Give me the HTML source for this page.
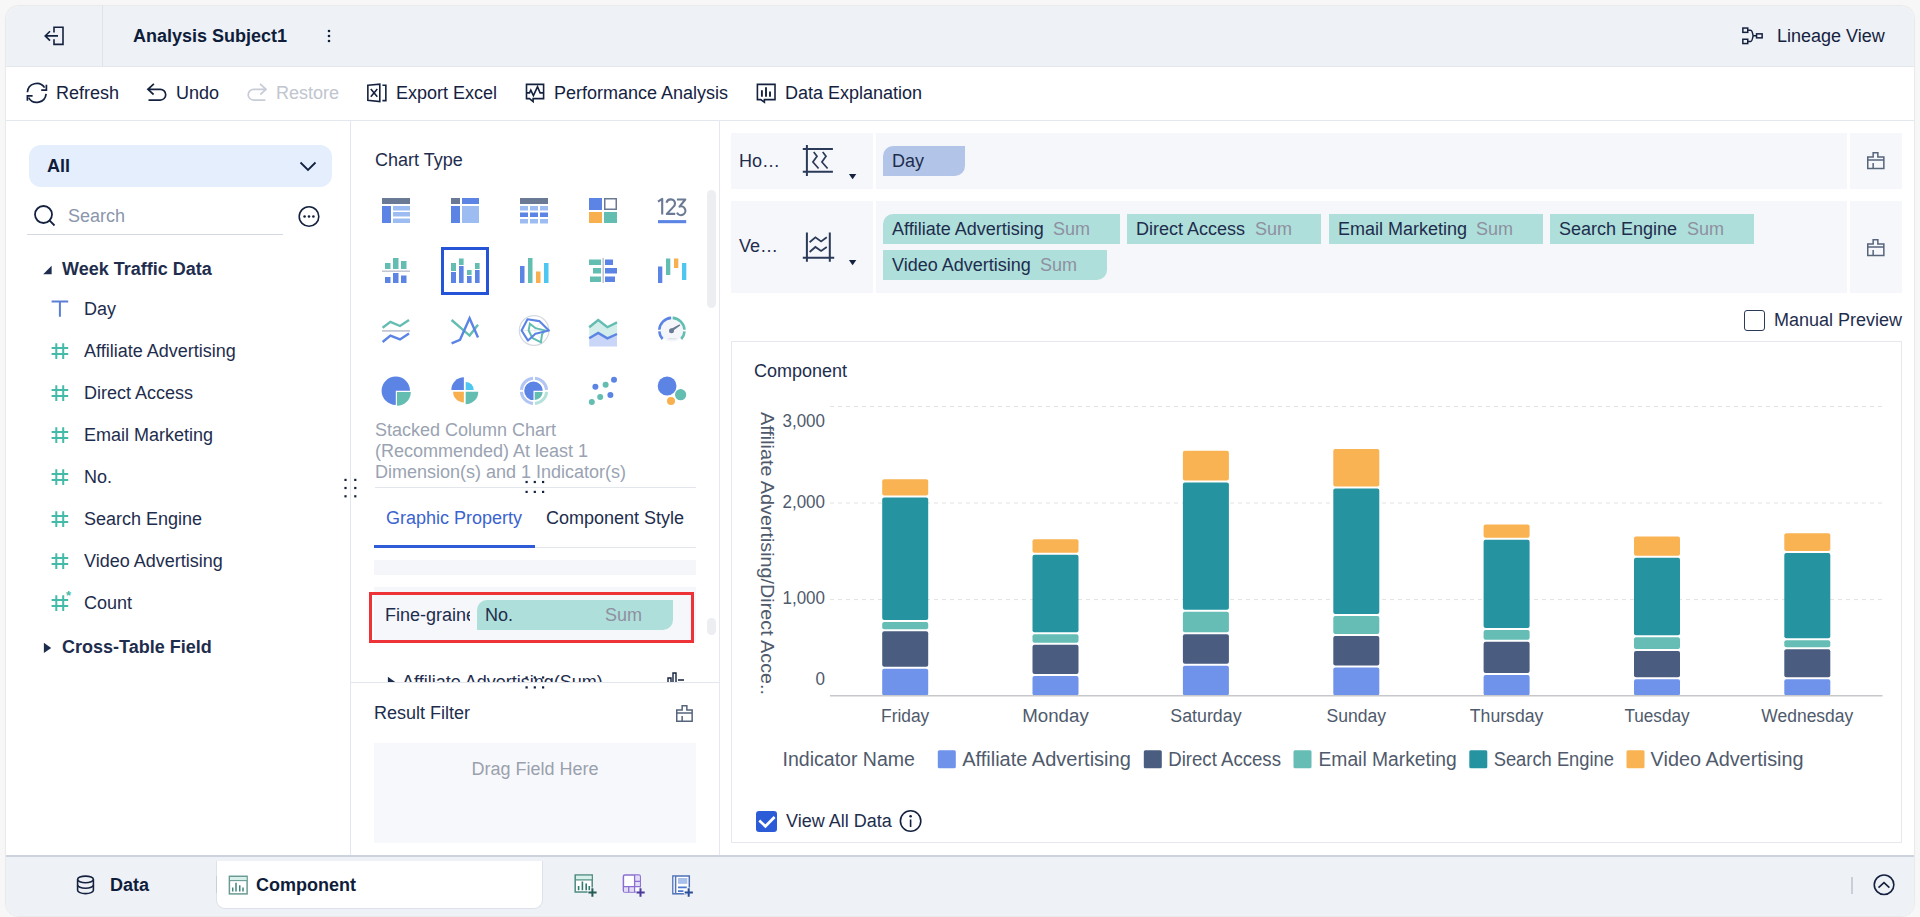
<!DOCTYPE html>
<html><head><meta charset="utf-8">
<style>
*{box-sizing:border-box;margin:0;padding:0}
html,body{width:1920px;height:917px;overflow:hidden;background:#f7f7f7;font-family:"Liberation Sans",sans-serif}
.t{position:absolute;white-space:nowrap;line-height:30px}
.r{position:absolute}
svg{position:absolute;overflow:visible}
</style></head><body>
<div class="r" style="left:6px;top:6px;width:1908px;height:910px;background:#fff;border-radius:13px;box-shadow:0 0 1px 1px rgba(0,0,0,0.06)"></div>
<div class="r" style="left:6px;top:6px;width:1908px;height:61px;background:#eef1f6;border-radius:13px 13px 0 0;border-bottom:1px solid #e3e7ee"></div>
<div class="r" style="left:102px;top:5px;width:1px;height:61px;background:#dfe3ea"></div>
<svg style="left:40px;top:24px;" width="28" height="24" viewBox="0 0 28 24"><g fill="none" stroke="#14223f" stroke-width="1.6"><path d="M14 8.5V3.2H23V20.4H14V15.2"/><path d="M18 11.9H5.5M10 7.2L5.2 11.9L10 16.6"/></g></svg>
<div class="t" style="left:133px;top:21px;font-size:18px;font-weight:700;color:#0f1d3a;">Analysis Subject1</div>
<svg style="left:326px;top:28px;" width="6" height="16" viewBox="0 0 6 16"><g fill="#14223f"><circle cx="3" cy="3" r="1.3"/><circle cx="3" cy="8" r="1.3"/><circle cx="3" cy="13" r="1.3"/></g></svg>
<svg style="left:1740px;top:25px;" width="26" height="22" viewBox="0 0 26 22"><g fill="none" stroke="#14223f" stroke-width="1.5"><rect x="2.85" y="3.05" width="4.9" height="4.3"/><rect x="2.85" y="14.25" width="4.9" height="4.3"/><rect x="16.55" y="8.85" width="5.6" height="4.0"/><path d="M7.8 5.25H10.6Q12.2 5.25 13.1 10.75Q12.2 16.4 10.6 16.4H7.8M13.1 10.75H16.5"/></g></svg>
<div class="t" style="left:1777px;top:21px;font-size:18px;color:#14223f;">Lineage View</div>
<div class="r" style="left:6px;top:120px;width:1908px;height:1px;background:#e3e7ee"></div>
<svg style="left:22px;top:78px;" width="30" height="30" viewBox="0 0 30 30"><g fill="none" stroke="#14223f" stroke-width="1.7"><path d="M5.4 14.2A9.4 9.4 0 0 1 22.6 9.6"/><path d="M24.1 15.8A9.4 9.4 0 0 1 6.6 19.6"/><path d="M24.4 6.8V12.1H19.2"/><path d="M5.4 22.8V17.8H10.6"/></g></svg>
<div class="t" style="left:56px;top:78px;font-size:18px;color:#14223f;">Refresh</div>
<svg style="left:142px;top:78px;" width="30" height="30" viewBox="0 0 30 30"><path d="M11.9 5.9L5.9 11.3L11.6 16.5M5.9 11.3H18.3A5.4 5.4 0 0 1 18.3 22.1H6.5" fill="none" stroke="#14223f" stroke-width="1.7"/></svg>
<div class="t" style="left:176px;top:78px;font-size:18px;color:#14223f;">Undo</div>
<svg style="left:242px;top:78px;" width="30" height="30" viewBox="0 0 30 30"><path d="M18 5.9L24 11.3L18.3 16.5M24 11.3H11.6A5.4 5.4 0 0 0 11.6 22.1H23.4" fill="none" stroke="#c7ccd6" stroke-width="1.7"/></svg>
<div class="t" style="left:276px;top:78px;font-size:18px;color:#c0c5cf;">Restore</div>
<svg style="left:366px;top:82px;" width="24" height="24" viewBox="0 0 24 24"><g fill="none" stroke="#14223f" stroke-width="1.6"><path d="M1.85 3.2L13.8 2.1V19.6L1.85 18.4Z"/><path d="M4.8 7.1L11.3 14.7M11.3 7.1L4.8 14.7"/><path d="M16.4 3.2H19.85V18.6H16.4"/></g></svg>
<div class="t" style="left:396px;top:78px;font-size:18px;color:#14223f;">Export Excel</div>
<svg style="left:520px;top:78px;" width="30" height="30" viewBox="0 0 30 30"><g fill="none" stroke="#14223f" stroke-width="1.6"><path d="M6.5 6.4H23.6V20.6H13.1V23.6L9.5 20.6H6.5Z"/><path d="M6.5 14.9H9.5L10.8 12.1L13.4 17.7L17.5 8.8L20.1 14.9H23.6"/></g></svg>
<div class="t" style="left:554px;top:78px;font-size:18px;color:#14223f;">Performance Analysis</div>
<svg style="left:750px;top:78px;" width="30" height="30" viewBox="0 0 30 30"><g fill="none" stroke="#14223f" stroke-width="1.6"><path d="M7.4 6.4H25V21.6H14.4V24.2L10.8 21.6H7.4Z"/><path d="M11.9 12.3V18.7M16 9.3V18.7M20 13.4V18.7" stroke-width="1.9"/></g></svg>
<div class="t" style="left:785px;top:78px;font-size:18px;color:#14223f;">Data Explanation</div>
<div class="r" style="left:350px;top:121px;width:1px;height:734px;background:#e3e6ec"></div>
<div class="r" style="left:29px;top:145px;width:303px;height:42px;background:#e4eefd;border-radius:12px"></div>
<div class="t" style="left:47px;top:151px;font-size:18px;font-weight:700;color:#0f1d3a;">All</div>
<svg style="left:298px;top:159px;" width="20" height="14" viewBox="0 0 20 14"><path d="M2.5 3.5L10 11L17.5 3.5" fill="none" stroke="#14223f" stroke-width="1.8"/></svg>
<svg style="left:33px;top:204px;" width="24" height="24" viewBox="0 0 24 24"><g fill="none" stroke="#14223f" stroke-width="1.8"><circle cx="10.5" cy="10.5" r="8.5"/><path d="M16.7 16.7L21.5 21.5"/></g></svg>
<div class="t" style="left:68px;top:201px;font-size:18px;color:#8a96ab;">Search</div>
<div class="r" style="left:27px;top:234px;width:256px;height:1px;background:#d4d9e1"></div>
<svg style="left:298px;top:205px;" width="24" height="24" viewBox="0 0 24 24"><g fill="none" stroke="#14223f" stroke-width="1.6"><circle cx="11" cy="11.5" r="9.8"/></g><g fill="#14223f"><circle cx="6.6" cy="11.5" r="1.3"/><circle cx="11" cy="11.5" r="1.3"/><circle cx="15.4" cy="11.5" r="1.3"/></g></svg>
<svg style="left:42px;top:264px;" width="12" height="12" viewBox="0 0 12 12"><path d="M9.6 1.8V10.2H1.2Z" fill="#1e2d4d"/></svg>
<div class="t" style="left:62px;top:254px;font-size:18px;font-weight:700;color:#1e2d4d;">Week Traffic Data</div>
<svg style="left:50px;top:300px;" width="20" height="18" viewBox="0 0 20 18"><path d="M1.6 1.6H18.2M9.9 1.6V16.8" fill="none" stroke="#5b7fd4" stroke-width="2"/></svg>
<div class="t" style="left:84px;top:294px;font-size:18px;color:#1e2d4d;">Day</div>
<svg style="left:51px;top:341.9px;" width="20" height="18" viewBox="0 0 20 18"><path d="M5.3 1.2V17M12.2 1.2V17M0.6 6.1H17.2M0.6 12H17.2" fill="none" stroke="#44bba8" stroke-width="2"/></svg>
<div class="t" style="left:84px;top:336px;font-size:18px;color:#1e2d4d;">Affiliate Advertising</div>
<svg style="left:51px;top:383.9px;" width="20" height="18" viewBox="0 0 20 18"><path d="M5.3 1.2V17M12.2 1.2V17M0.6 6.1H17.2M0.6 12H17.2" fill="none" stroke="#44bba8" stroke-width="2"/></svg>
<div class="t" style="left:84px;top:378px;font-size:18px;color:#1e2d4d;">Direct Access</div>
<svg style="left:51px;top:425.9px;" width="20" height="18" viewBox="0 0 20 18"><path d="M5.3 1.2V17M12.2 1.2V17M0.6 6.1H17.2M0.6 12H17.2" fill="none" stroke="#44bba8" stroke-width="2"/></svg>
<div class="t" style="left:84px;top:420px;font-size:18px;color:#1e2d4d;">Email Marketing</div>
<svg style="left:51px;top:467.9px;" width="20" height="18" viewBox="0 0 20 18"><path d="M5.3 1.2V17M12.2 1.2V17M0.6 6.1H17.2M0.6 12H17.2" fill="none" stroke="#44bba8" stroke-width="2"/></svg>
<div class="t" style="left:84px;top:462px;font-size:18px;color:#1e2d4d;">No.</div>
<svg style="left:51px;top:509.9px;" width="20" height="18" viewBox="0 0 20 18"><path d="M5.3 1.2V17M12.2 1.2V17M0.6 6.1H17.2M0.6 12H17.2" fill="none" stroke="#44bba8" stroke-width="2"/></svg>
<div class="t" style="left:84px;top:504px;font-size:18px;color:#1e2d4d;">Search Engine</div>
<svg style="left:51px;top:551.9px;" width="20" height="18" viewBox="0 0 20 18"><path d="M5.3 1.2V17M12.2 1.2V17M0.6 6.1H17.2M0.6 12H17.2" fill="none" stroke="#44bba8" stroke-width="2"/></svg>
<div class="t" style="left:84px;top:546px;font-size:18px;color:#1e2d4d;">Video Advertising</div>
<svg style="left:51px;top:593.9px;" width="20" height="18" viewBox="0 0 20 18"><path d="M5.3 1.2V17M12.2 1.2V17M0.6 6.1H17.2M0.6 12H17.2" fill="none" stroke="#44bba8" stroke-width="2"/></svg>
<div class="t" style="left:84px;top:588px;font-size:18px;color:#1e2d4d;">Count</div>
<div class="t" style="left:66px;top:581px;font-size:13px;font-weight:700;color:#44bba8;">*</div>
<svg style="left:42px;top:642px;" width="12" height="12" viewBox="0 0 12 12"><path d="M1.9 0.8L9.2 5.9L1.9 11.1Z" fill="#1e2d4d"/></svg>
<div class="t" style="left:62px;top:632px;font-size:18px;font-weight:700;color:#1e2d4d;">Cross-Table Field</div>
<svg style="left:340px;top:470px;" width="20" height="30" viewBox="0 0 20 30"><g fill="#14223f"><rect x="4.4" y="8.8" width="2.2" height="2.2"/><rect x="14.2" y="8.8" width="2.2" height="2.2"/><rect x="4.4" y="16.9" width="2.2" height="2.2"/><rect x="14.2" y="16.9" width="2.2" height="2.2"/><rect x="4.4" y="25.2" width="2.2" height="2.2"/><rect x="14.2" y="25.2" width="2.2" height="2.2"/></g></svg>
<div class="t" style="left:375px;top:145px;font-size:18px;color:#1e2d4d;">Chart Type</div>
<div class="r" style="left:707px;top:190px;width:9px;height:118px;background:#eceef2;border-radius:5px"></div>
<div class="r" style="left:707px;top:618px;width:9px;height:17px;background:#eceef2;border-radius:5px"></div>
<svg style="left:382px;top:198px;" width="30" height="30" viewBox="0 0 30 30"><rect x="0" y="0" width="28" height="6" fill="#6b7a94"/><rect x="0" y="8" width="9" height="17" fill="#5b84e5"/><rect x="11" y="8" width="17" height="4.5" fill="#9dbcf2"/><rect x="11" y="14" width="17" height="4.5" fill="#9dbcf2"/><rect x="11" y="20.5" width="17" height="4.5" fill="#9dbcf2"/></svg>
<svg style="left:451px;top:198px;" width="30" height="30" viewBox="0 0 30 30"><rect x="0" y="0" width="9" height="6" fill="#6b7a94"/><rect x="11" y="0" width="17" height="6" fill="#5b84e5"/><rect x="0" y="8" width="9" height="17" fill="#5b84e5"/><rect x="11" y="8" width="17" height="17" fill="#9dbcf2"/></svg>
<svg style="left:520px;top:198px;" width="30" height="30" viewBox="0 0 30 30"><rect x="0" y="0" width="28" height="6" fill="#6b7a94"/><rect x="0" y="8" width="8" height="4.5" fill="#9dbcf2"/><rect x="10" y="8" width="8" height="4.5" fill="#9dbcf2"/><rect x="20" y="8" width="8" height="4.5" fill="#9dbcf2"/><rect x="0" y="14.5" width="8" height="4.5" fill="#5b84e5"/><rect x="10" y="14.5" width="8" height="4.5" fill="#5b84e5"/><rect x="20" y="14.5" width="8" height="4.5" fill="#5b84e5"/><rect x="0" y="21" width="8" height="4.5" fill="#9dbcf2"/><rect x="10" y="21" width="8" height="4.5" fill="#9dbcf2"/><rect x="20" y="21" width="8" height="4.5" fill="#9dbcf2"/></svg>
<svg style="left:589px;top:198px;" width="30" height="30" viewBox="0 0 30 30"><rect x="0" y="0" width="13" height="12" fill="#5b84e5"/><rect x="15.75" y="0.75" width="11.5" height="10.5" fill="none" stroke="#6b7a94" stroke-width="1.5"/><rect x="0" y="14" width="13" height="11" fill="#f8b04e"/><rect x="15" y="14" width="13" height="11" fill="#63bdb1"/></svg>
<svg style="left:650px;top:190px;" width="40" height="40" viewBox="0 0 40 40"><g fill="none" stroke="#6b7a94" stroke-width="2.1" stroke-linejoin="round"><path d="M8 11.6L12.2 8.9V24.6"/><path d="M16.5 12.8A4.3 4.3 0 0 1 25 13.4Q25 15.1 23.6 16.6L16.8 23.9H25.2"/><path d="M26.9 9.5H35.3L29.5 16.6A4.4 4.4 0 1 1 27 22.6"/></g><rect x="8" y="30.1" width="28.2" height="3.1" fill="#5b84e5"/></svg>
<svg style="left:382px;top:258px;" width="30" height="30" viewBox="0 0 30 30"><rect x="0" y="12.4" width="28" height="1.6" fill="#c3c9d4"/><rect x="3" y="5" width="5.5" height="6" fill="#63bdb1"/><rect x="11" y="0" width="5.5" height="11" fill="#63bdb1"/><rect x="19" y="3" width="5.5" height="8" fill="#63bdb1"/><rect x="3" y="19" width="5.5" height="6" fill="#5b84e5"/><rect x="11" y="15" width="5.5" height="10" fill="#5b84e5"/><rect x="19" y="17.5" width="5.5" height="7.5" fill="#5b84e5"/></svg>
<div class="r" style="left:441px;top:247px;width:48px;height:48px;border:3px solid #2654d8"></div>
<svg style="left:451px;top:258px;" width="30" height="30" viewBox="0 0 30 30"><rect x="0" y="5" width="5" height="8" fill="#63bdb1"/><rect x="0" y="14" width="5" height="11" fill="#5b84e5"/><rect x="8" y="0.5" width="4.6" height="6.5" fill="#63bdb1"/><rect x="8" y="8" width="4.6" height="17" fill="#5b84e5"/><rect x="16" y="12" width="4.6" height="5" fill="#63bdb1"/><rect x="16" y="18" width="4.6" height="7" fill="#5b84e5"/><rect x="24" y="5" width="4.6" height="6" fill="#63bdb1"/><rect x="24" y="12" width="4.6" height="13" fill="#5b84e5"/></svg>
<svg style="left:520px;top:258px;" width="30" height="30" viewBox="0 0 30 30"><rect x="0" y="8" width="4.5" height="17" fill="#5b84e5"/><rect x="8" y="0" width="4.5" height="25" fill="#63bdb1"/><rect x="16" y="13.5" width="4.5" height="11.5" fill="#f8b04e"/><rect x="24" y="5" width="4.5" height="20" fill="#4ec6f2"/></svg>
<svg style="left:589px;top:258px;" width="30" height="30" viewBox="0 0 30 30"><rect x="13.5" y="0" width="1.3" height="25" fill="#b4bac6"/><rect x="0" y="1.5" width="12" height="5.5" fill="#63bdb1"/><rect x="4" y="10" width="8" height="5.5" fill="#63bdb1"/><rect x="1" y="18.5" width="11" height="5.5" fill="#63bdb1"/><rect x="16" y="1.5" width="8" height="5.5" fill="#5b84e5"/><rect x="16" y="10" width="12" height="5.5" fill="#5b84e5"/><rect x="16" y="18.5" width="10" height="5.5" fill="#5b84e5"/></svg>
<svg style="left:658px;top:258px;" width="30" height="30" viewBox="0 0 30 30"><rect x="0" y="8.5" width="4.3" height="16.5" fill="#5b84e5"/><rect x="8" y="0.5" width="4.3" height="16.5" fill="#63bdb1"/><rect x="16" y="0.5" width="4.3" height="9.5" fill="#f8b04e"/><rect x="24" y="5" width="4.3" height="17" fill="#4ec6f2"/></svg>
<svg style="left:380px;top:316px;" width="32" height="30" viewBox="0 0 32 30"><polyline points="2.6,11.8 10.4,5.8 20,10 29,4" fill="none" stroke="#63bdb1" stroke-width="2.4"/><rect x="2" y="14" width="28" height="1.8" fill="#c3c9d4"/><polyline points="2.6,26 10.4,19.6 20,23.4 29,17.5" fill="none" stroke="#5b84e5" stroke-width="2.4"/></svg>
<svg style="left:449px;top:315px;" width="32" height="32" viewBox="0 0 32 32"><polyline points="2.6,5 20.6,20.6 29,9.8" fill="none" stroke="#63bdb1" stroke-width="2.4"/><polyline points="2.6,28.4 11,24.8 20.6,3.2 29,22.4" fill="none" stroke="#5b84e5" stroke-width="2.4"/></svg>
<svg style="left:518px;top:315px;" width="32" height="32" viewBox="0 0 32 32"><circle cx="16.1" cy="15.5" r="14.8" fill="#fff" stroke="#d5d9e0" stroke-width="1.2"/><path d="M3 15.5H29M16.1 15.5L22 8M16.1 15.5L22 23" stroke="#e6e8ec" stroke-width="0.8"/><polygon points="11.9,8.8 17.4,13.1 26.6,15.3 24,19.5 22.9,27.3 14.3,22.9 10.6,15.3" fill="none" stroke="#63bdb1" stroke-width="2"/><polygon points="9.5,4.2 21.3,6.1 30.9,15.5 17.4,18.8 10,25.6 3.6,15.5" fill="none" stroke="#5b84e5" stroke-width="2.1" stroke-linejoin="round"/></svg>
<svg style="left:587px;top:317px;" width="32" height="30" viewBox="0 0 32 30"><path d="M2.2 10.2L11.2 3L20.4 10.2L30 5.4V17L20.4 21.4L11.2 16L2.2 21.2Z" fill="#d3eeea"/><path d="M2.2 21.2L11.2 16L20.4 21.4L30 17V29.6H2.2Z" fill="#c9d6f7"/><polyline points="2.2,10.2 11.2,3 20.4,10.2 30,5.4" fill="none" stroke="#63bdb1" stroke-width="2.4"/><polyline points="2.2,21.2 11.2,16 20.4,21.4 30,17" fill="none" stroke="#5b84e5" stroke-width="2.4"/></svg>
<svg style="left:656px;top:315px;" width="32" height="32" viewBox="0 0 32 32"><circle cx="15.9" cy="15.5" r="11.2" fill="#f5f6f9"/><path d="M15.2 2.9A12.6 12.6 0 0 0 3.3 14.8M3.3 16.3A12.6 12.6 0 0 0 6.6 24" fill="none" stroke="#5b84e5" stroke-width="2.6"/><path d="M16.6 2.9A12.6 12.6 0 0 1 28.5 14.8M28.5 16.3A12.6 12.6 0 0 1 25.2 24" fill="none" stroke="#63bdb1" stroke-width="2.6"/><circle cx="15.5" cy="15.8" r="2.5" fill="#6b7a94"/><path d="M14.6 16.8L23.5 10.2L16.2 14.2Z" fill="#6b7a94" stroke="#6b7a94" stroke-width="1.4" stroke-linejoin="round"/><rect x="12" y="23" width="8.5" height="1.4" fill="#dfe2e8"/></svg>
<svg style="left:380px;top:375px;" width="32" height="32" viewBox="0 0 32 32"><path d="M15.8 15.8V30A14.2 14.2 0 1 1 30 15.8Z" fill="#5b84e5"/><path d="M17 17H30.8A13.8 13.8 0 0 1 17 30.8Z" fill="#63bdb1"/></svg>
<svg style="left:449px;top:375px;" width="32" height="32" viewBox="0 0 32 32"><path d="M14.9 14.9V2.3A12.6 12.6 0 0 0 2.3 14.9Z" fill="#5b84e5"/><path d="M16.7 14.9V6.9A8 8 0 0 1 24.7 14.9Z" fill="#4ec6f2"/><path d="M14.9 16.7V27.5A10.8 10.8 0 0 1 4.1 16.7Z" fill="#f8b04e"/><path d="M16.7 16.7H29.3A12.6 12.6 0 0 1 16.7 29.3Z" fill="#63bdb1"/></svg>
<svg style="left:518px;top:375px;" width="32" height="32" viewBox="0 0 32 32"><g fill="none" stroke-width="3"><path d="M15 3.2A12.6 12.6 0 0 0 3.4 14.8M3.4 16.8A12.6 12.6 0 0 0 15 28.4M17 3.2A12.6 12.6 0 0 1 28.6 14.8" stroke="#b2c5f3"/><path d="M28.6 16.8A12.6 12.6 0 0 1 17 28.4" stroke="#b5e1db"/></g><path d="M15.5 15.8V25.1A9.3 9.3 0 1 1 24.8 15.8Z" fill="#5b84e5"/><path d="M16.7 17H24.6A7.9 7.9 0 0 1 16.7 24.9Z" fill="#63bdb1"/></svg>
<svg style="left:587px;top:375px;" width="32" height="32" viewBox="0 0 32 32"><g fill="#5b84e5"><circle cx="8.4" cy="11.8" r="3"/><circle cx="27" cy="4.7" r="3"/><circle cx="23.4" cy="20" r="3"/></g><g fill="#63bdb1"><circle cx="18.6" cy="9.8" r="3"/><circle cx="13.2" cy="22.1" r="3"/><circle cx="4.8" cy="26.9" r="3"/></g></svg>
<svg style="left:656px;top:375px;" width="32" height="32" viewBox="0 0 32 32"><circle cx="11.1" cy="11" r="9.4" fill="#5b84e5"/><circle cx="24.6" cy="19.7" r="5.6" fill="#63bdb1"/><circle cx="15" cy="26" r="4" fill="#f8b04e"/></svg>
<div class="t" style="left:375px;top:415px;font-size:18px;color:#9aa3b2;">Stacked Column Chart</div>
<div class="t" style="left:375px;top:436px;font-size:18px;color:#9aa3b2;">(Recommended) At least 1</div>
<div class="t" style="left:375px;top:457px;font-size:18px;color:#9aa3b2;">Dimension(s) and 1 Indicator(s)</div>
<div class="r" style="left:375px;top:487px;width:321px;height:1px;background:#e3e6ec"></div>
<svg style="left:522px;top:478px;" width="26" height="18" viewBox="0 0 26 18"><g fill="#14223f"><rect x="3.5" y="2.9" width="2.2" height="2.2"/><rect x="11.7" y="2.9" width="2.2" height="2.2"/><rect x="20" y="2.9" width="2.2" height="2.2"/><rect x="3.5" y="12.8" width="2.2" height="2.2"/><rect x="11.7" y="12.8" width="2.2" height="2.2"/><rect x="20" y="12.8" width="2.2" height="2.2"/></g></svg>
<div class="t" style="left:386px;top:503px;font-size:18px;color:#3a63d0;">Graphic Property</div>
<div class="t" style="left:546px;top:503px;font-size:18px;color:#1e2d4d;">Component Style</div>
<div class="r" style="left:374px;top:547px;width:322px;height:1px;background:#e3e6ec"></div>
<div class="r" style="left:374px;top:545px;width:161px;height:3px;background:#2f5bd6"></div>
<div class="r" style="left:374px;top:560px;width:322px;height:15px;background:#f5f6fa"></div>
<div class="r" style="left:374px;top:587px;width:322px;height:55px;background:#f5f7fb"></div>
<div class="r" style="left:369px;top:592px;width:325px;height:51px;border:3px solid #ee3338"></div>
<div class="r" style="left:385px;top:590px;width:85px;height:50px;overflow:hidden"><div class="t" style="left:0;top:10px;font-size:18px;color:#1e2d4d">Fine-grained</div></div>
<div class="r" style="left:477px;top:600px;width:196px;height:30px;background:#aedfda;border-radius:10px 0 10px 0"></div>
<div class="t" style="left:485px;top:600px;font-size:18px;color:#1e2d4d;">No.</div>
<div class="t" style="left:605px;top:600px;font-size:18px;color:#8e90a0;">Sum</div>
<div class="r" style="left:351px;top:655px;width:368px;height:27px;overflow:hidden"><div class="t" style="left:51px;top:12px;font-size:18px;color:#1e2d4d">Affiliate Advertising(Sum)</div><svg style="left:35px;top:21px" width="12" height="12"><path d="M1.9 0.8L9.2 5.9L1.9 11.1Z" fill="#1e2d4d"/></svg><svg style="left:316px;top:17px" width="22" height="16"><path d="M1 15V6H4V15M6 15V1H9V15M11 8H17" fill="none" stroke="#14223f" stroke-width="1.4"/></svg></div>
<div class="r" style="left:351px;top:682px;width:368px;height:1px;background:#e3e6ec"></div>
<svg style="left:522px;top:670px;" width="26" height="20" viewBox="0 0 26 20"><g fill="#14223f"><rect x="3.5" y="6.4" width="2.2" height="2.2"/><rect x="11.7" y="6.4" width="2.2" height="2.2"/><rect x="20" y="6.4" width="2.2" height="2.2"/><rect x="3.5" y="16.3" width="2.2" height="2.2"/><rect x="11.7" y="16.3" width="2.2" height="2.2"/><rect x="20" y="16.3" width="2.2" height="2.2"/></g></svg>
<div class="r" style="left:719px;top:121px;width:1px;height:734px;background:#e6e7ef"></div>
<div class="t" style="left:374px;top:698px;font-size:18px;color:#1e2d4d;">Result Filter</div>
<svg style="left:675.5px;top:704.5px;" width="17" height="17" viewBox="0 0 17 17"><path d="M0.75 16.15V4.95H6.15V0.75H10.85V4.95H16.15V16.15Z M0.75 7.9H16.15 M6.15 11V16.15" fill="none" stroke="#56647c" stroke-width="1.5" stroke-linejoin="miter"/></svg>
<div class="r" style="left:374px;top:743px;width:322px;height:100px;background:#f7f8fb"></div>
<div class="t" style="left:235px;width:600px;text-align:center;top:754px;font-size:18px;color:#9aa1ae;">Drag Field Here</div>
<div class="r" style="left:731px;top:133px;width:1171px;height:56px;background:#f6f7fb"></div>
<div class="r" style="left:873px;top:133px;width:3px;height:56px;background:#fff"></div>
<div class="r" style="left:1847px;top:133px;width:3px;height:56px;background:#fff"></div>
<div class="t" style="left:739px;top:146px;font-size:18px;color:#1e2d4d;">Ho…</div>
<svg style="left:800px;top:143px;" width="36" height="36" viewBox="0 0 36 36"><g fill="none" stroke="#2b3a58" stroke-width="2"><path d="M6.9 2.1V32.9M2.8 5.9H32.9M2.8 28.8H32.9"/><path d="M13.7 8.9L17 13.3L12.9 19L18.6 25.5" stroke-width="1.7"/><path d="M22.7 8.9L26 13.3L21.9 19L27.6 25.5" stroke-width="1.7"/></g></svg>
<svg style="left:848px;top:173px;" width="9" height="7" viewBox="0 0 9 7"><path d="M0.9 1H8.3L4.6 6.2Z" fill="#14223f"/></svg>
<div class="r" style="left:883px;top:146px;width:82px;height:30px;background:#b2c5e8;border-radius:10px 0 10px 0"></div>
<div class="t" style="left:892px;top:146px;font-size:18px;color:#1e2d4d;">Day</div>
<svg style="left:1866.8px;top:152.3px;" width="18" height="18" viewBox="0 0 18 18"><path d="M0.75 16.55V4.95H6.15V0.75H10.85V4.95H16.85V16.55Z M0.75 7.9H16.85 M6.15 11V16.55" fill="none" stroke="#56647c" stroke-width="1.5" stroke-linejoin="miter"/></svg>
<div class="r" style="left:731px;top:201px;width:1171px;height:92px;background:#f6f7fb"></div>
<div class="r" style="left:873px;top:201px;width:3px;height:92px;background:#fff"></div>
<div class="r" style="left:1847px;top:201px;width:3px;height:92px;background:#fff"></div>
<div class="t" style="left:739px;top:231px;font-size:18px;color:#1e2d4d;">Ve…</div>
<svg style="left:800px;top:230px;" width="36" height="36" viewBox="0 0 36 36"><g fill="none" stroke="#2b3a58" stroke-width="2"><path d="M6.9 2.4V31.8M29.8 2.4V31.8M2.8 27.7H34.2"/><polyline points="9.6,12.2 15.4,7.3 21.1,11.4 26.8,7.3" stroke-width="1.8"/><polyline points="9.6,22 15.4,17 21.1,21 26.8,17" stroke-width="1.8"/></g></svg>
<svg style="left:848px;top:259px;" width="9" height="7" viewBox="0 0 9 7"><path d="M0.9 1H8.3L4.6 6.2Z" fill="#14223f"/></svg>
<svg style="left:1866.8px;top:238.5px;" width="18" height="18" viewBox="0 0 18 18"><path d="M0.75 16.55V4.95H6.15V0.75H10.85V4.95H16.85V16.55Z M0.75 7.9H16.85 M6.15 11V16.55" fill="none" stroke="#56647c" stroke-width="1.5" stroke-linejoin="miter"/></svg>
<div class="r" style="left:883px;top:214px;width:237px;height:30px;background:#aedfda;border-radius:10px 0 0 0"></div>
<div class="t" style="left:892px;top:214px;font-size:18px;color:#1e2d4d;">Affiliate Advertising</div>
<div class="t" style="left:1053px;top:214px;font-size:18px;color:#8e90a0;">Sum</div>
<div class="r" style="left:1127px;top:214px;width:194px;height:30px;background:#aedfda;border-radius:0"></div>
<div class="t" style="left:1136px;top:214px;font-size:18px;color:#1e2d4d;">Direct Access</div>
<div class="t" style="left:1255px;top:214px;font-size:18px;color:#8e90a0;">Sum</div>
<div class="r" style="left:1329px;top:214px;width:214px;height:30px;background:#aedfda;border-radius:0"></div>
<div class="t" style="left:1338px;top:214px;font-size:18px;color:#1e2d4d;">Email Marketing</div>
<div class="t" style="left:1476px;top:214px;font-size:18px;color:#8e90a0;">Sum</div>
<div class="r" style="left:1550px;top:214px;width:204px;height:30px;background:#aedfda;border-radius:0"></div>
<div class="t" style="left:1559px;top:214px;font-size:18px;color:#1e2d4d;">Search Engine</div>
<div class="t" style="left:1687px;top:214px;font-size:18px;color:#8e90a0;">Sum</div>
<div class="r" style="left:883px;top:250px;width:224px;height:30px;background:#aedfda;border-radius:0 0 10px 0"></div>
<div class="t" style="left:892px;top:250px;font-size:18px;color:#1e2d4d;">Video Advertising</div>
<div class="t" style="left:1040px;top:250px;font-size:18px;color:#8e90a0;">Sum</div>
<div class="r" style="left:1744px;top:310px;width:21px;height:21px;border:1.5px solid #2b3a58;border-radius:3px;background:#fff"></div>
<div class="t" style="left:1774px;top:305px;font-size:18px;color:#1e2d4d;">Manual Preview</div>
<div class="r" style="left:731px;top:341px;width:1171px;height:502px;border:1px solid #e6e8ee;background:#fff"></div>
<div class="t" style="left:754px;top:356px;font-size:18px;color:#1e2d4d;">Component</div>
<svg style="left:0px;top:0px;pointer-events:none" width="1920" height="917" viewBox="0 0 1920 917"><line x1="830" y1="406.5" x2="1882.5" y2="406.5" stroke="#e2e2e2" stroke-width="1" stroke-dasharray="4 4"/><line x1="830" y1="503" x2="1882.5" y2="503" stroke="#e2e2e2" stroke-width="1" stroke-dasharray="4 4"/><line x1="830" y1="599.6" x2="1882.5" y2="599.6" stroke="#e2e2e2" stroke-width="1" stroke-dasharray="4 4"/><rect x="882.2" y="479.2" width="46" height="16.4" rx="2" fill="#f9b352"/><rect x="882.2" y="497.6" width="46" height="122.5" rx="2" fill="#2594a0"/><rect x="882.2" y="622.1" width="46" height="7.1" rx="2" fill="#66bdb5"/><rect x="882.2" y="631.2" width="46" height="35.6" rx="2" fill="#4a5d80"/><rect x="882.2" y="668.8" width="46" height="26.8" rx="2" fill="#6f92ea"/><text x="905.2" y="722.3" text-anchor="middle" font-family="Liberation Sans" font-size="18" fill="#4f5a6c" textLength="48.2" lengthAdjust="spacingAndGlyphs">Friday</text><rect x="1032.5" y="539.2" width="46" height="13.6" rx="2" fill="#f9b352"/><rect x="1032.5" y="554.8" width="46" height="77.4" rx="2" fill="#2594a0"/><rect x="1032.5" y="634.2" width="46" height="8.6" rx="2" fill="#66bdb5"/><rect x="1032.5" y="644.8" width="46" height="29.2" rx="2" fill="#4a5d80"/><rect x="1032.5" y="676.0" width="46" height="19.6" rx="2" fill="#6f92ea"/><text x="1055.5" y="722.3" text-anchor="middle" font-family="Liberation Sans" font-size="18" fill="#4f5a6c" textLength="66.5" lengthAdjust="spacingAndGlyphs">Monday</text><rect x="1182.9" y="450.8" width="46" height="29.8" rx="2" fill="#f9b352"/><rect x="1182.9" y="482.6" width="46" height="127.1" rx="2" fill="#2594a0"/><rect x="1182.9" y="611.7" width="46" height="20.6" rx="2" fill="#66bdb5"/><rect x="1182.9" y="634.3" width="46" height="29.5" rx="2" fill="#4a5d80"/><rect x="1182.9" y="665.8" width="46" height="29.8" rx="2" fill="#6f92ea"/><text x="1205.9" y="722.3" text-anchor="middle" font-family="Liberation Sans" font-size="18" fill="#4f5a6c" textLength="71.3" lengthAdjust="spacingAndGlyphs">Saturday</text><rect x="1333.3" y="449.1" width="46" height="37.5" rx="2" fill="#f9b352"/><rect x="1333.3" y="488.6" width="46" height="125.4" rx="2" fill="#2594a0"/><rect x="1333.3" y="616.0" width="46" height="18.0" rx="2" fill="#66bdb5"/><rect x="1333.3" y="636.0" width="46" height="29.5" rx="2" fill="#4a5d80"/><rect x="1333.3" y="667.5" width="46" height="28.1" rx="2" fill="#6f92ea"/><text x="1356.3" y="722.3" text-anchor="middle" font-family="Liberation Sans" font-size="18" fill="#4f5a6c" textLength="59.5" lengthAdjust="spacingAndGlyphs">Sunday</text><rect x="1483.6" y="524.4" width="46" height="13.3" rx="2" fill="#f9b352"/><rect x="1483.6" y="539.7" width="46" height="88.3" rx="2" fill="#2594a0"/><rect x="1483.6" y="630.0" width="46" height="9.7" rx="2" fill="#66bdb5"/><rect x="1483.6" y="641.7" width="46" height="31.2" rx="2" fill="#4a5d80"/><rect x="1483.6" y="674.9" width="46" height="20.7" rx="2" fill="#6f92ea"/><text x="1506.6" y="722.3" text-anchor="middle" font-family="Liberation Sans" font-size="18" fill="#4f5a6c" textLength="73.5" lengthAdjust="spacingAndGlyphs">Thursday</text><rect x="1634.0" y="536.4" width="46" height="19.3" rx="2" fill="#f9b352"/><rect x="1634.0" y="557.7" width="46" height="77.5" rx="2" fill="#2594a0"/><rect x="1634.0" y="637.2" width="46" height="11.7" rx="2" fill="#66bdb5"/><rect x="1634.0" y="650.9" width="46" height="26.3" rx="2" fill="#4a5d80"/><rect x="1634.0" y="679.2" width="46" height="16.4" rx="2" fill="#6f92ea"/><text x="1657.0" y="722.3" text-anchor="middle" font-family="Liberation Sans" font-size="18" fill="#4f5a6c" textLength="65.2" lengthAdjust="spacingAndGlyphs">Tuesday</text><rect x="1784.3" y="533.2" width="46" height="17.8" rx="2" fill="#f9b352"/><rect x="1784.3" y="553.0" width="46" height="85.2" rx="2" fill="#2594a0"/><rect x="1784.3" y="640.2" width="46" height="7.1" rx="2" fill="#66bdb5"/><rect x="1784.3" y="649.3" width="46" height="27.9" rx="2" fill="#4a5d80"/><rect x="1784.3" y="679.2" width="46" height="16.4" rx="2" fill="#6f92ea"/><text x="1807.3" y="722.3" text-anchor="middle" font-family="Liberation Sans" font-size="18" fill="#4f5a6c" textLength="91.9" lengthAdjust="spacingAndGlyphs">Wednesday</text><line x1="830" y1="695.8" x2="1882.5" y2="695.8" stroke="#c6c8cc" stroke-width="1.5"/><text x="825" y="426.9" text-anchor="end" font-family="Liberation Sans" font-size="18" fill="#4f5a6c" textLength="42.5" lengthAdjust="spacingAndGlyphs">3,000</text><text x="825" y="507.5" text-anchor="end" font-family="Liberation Sans" font-size="18" fill="#4f5a6c" textLength="42.5" lengthAdjust="spacingAndGlyphs">2,000</text><text x="825" y="604" text-anchor="end" font-family="Liberation Sans" font-size="18" fill="#4f5a6c" textLength="42.5" lengthAdjust="spacingAndGlyphs">1,000</text><text x="825" y="684.7" text-anchor="end" font-family="Liberation Sans" font-size="18" fill="#4f5a6c" textLength="9.5" lengthAdjust="spacingAndGlyphs">0</text><text transform="translate(760.5,412) rotate(90)" x="0" y="0" font-family="Liberation Sans" font-size="19" fill="#4f5a6c" textLength="283" lengthAdjust="spacingAndGlyphs">Affiliate Advertising/Direct Acce..</text><text x="782.5" y="765.8" font-family="Liberation Sans" font-size="20" fill="#4f5a6c" textLength="132.5" lengthAdjust="spacingAndGlyphs">Indicator Name</text><rect x="937.8" y="750.2" width="18" height="18" rx="1.5" fill="#6f92ea"/><text x="962.2" y="765.8" font-family="Liberation Sans" font-size="20" fill="#4f5a6c" textLength="168.6" lengthAdjust="spacingAndGlyphs">Affiliate Advertising</text><rect x="1143.8" y="750.2" width="18" height="18" rx="1.5" fill="#4a5d80"/><text x="1168.2" y="765.8" font-family="Liberation Sans" font-size="20" fill="#4f5a6c" textLength="112.8" lengthAdjust="spacingAndGlyphs">Direct Access</text><rect x="1293.5" y="750.2" width="18" height="18" rx="1.5" fill="#66bdb5"/><text x="1318.5" y="765.8" font-family="Liberation Sans" font-size="20" fill="#4f5a6c" textLength="138.1" lengthAdjust="spacingAndGlyphs">Email Marketing</text><rect x="1469.3" y="750.2" width="18" height="18" rx="1.5" fill="#2594a0"/><text x="1493.7" y="765.8" font-family="Liberation Sans" font-size="20" fill="#4f5a6c" textLength="120.3" lengthAdjust="spacingAndGlyphs">Search Engine</text><rect x="1626.5" y="750.2" width="18" height="18" rx="1.5" fill="#f9b352"/><text x="1650.6" y="765.8" font-family="Liberation Sans" font-size="20" fill="#4f5a6c" textLength="153" lengthAdjust="spacingAndGlyphs">Video Advertising</text></svg>
<div class="r" style="left:756px;top:811px;width:21px;height:21px;background:#2b5bd7;border-radius:3px"></div>
<svg style="left:756px;top:811px;" width="21" height="21" viewBox="0 0 21 21"><path d="M3.3 9.6L9.4 15.3L18.6 6" fill="none" stroke="#fff" stroke-width="2.7"/></svg>
<div class="t" style="left:786px;top:806px;font-size:18px;color:#1e2d4d;">View All Data</div>
<svg style="left:899px;top:810px;" width="24" height="24" viewBox="0 0 24 24"><g fill="none" stroke="#14223f" stroke-width="1.6"><circle cx="11.6" cy="11" r="10.2"/><path d="M11.6 9.5V17"/></g><circle cx="11.6" cy="6.2" r="1.3" fill="#14223f"/></svg>
<div class="r" style="left:6px;top:855px;width:1908px;height:61px;background:#eef1f6;border-top:2px solid #cdd3dd;border-radius:0 0 13px 13px"></div>
<svg style="left:74px;top:873px;" width="22" height="24" viewBox="0 0 22 24"><g fill="none" stroke="#14223f" stroke-width="1.6"><ellipse cx="11.5" cy="6.4" rx="7.9" ry="3.3"/><path d="M3.6 6.4V17.3A7.9 3.3 0 0 0 19.4 17.3V6.4"/><path d="M3.6 11.9A7.9 3.3 0 0 0 19.4 11.9"/></g></svg>
<div class="t" style="left:110px;top:870px;font-size:18px;font-weight:700;color:#0f1d3a;">Data</div>
<div class="r" style="left:216px;top:861px;width:327px;height:48px;background:#fff;border:1px solid #dde2ea;border-top:none;border-radius:0 0 9px 9px"></div>
<div class="r" style="left:216px;top:876px;width:1px;height:17px;background:#c9ced8"></div>
<svg style="left:227px;top:874px;" width="24" height="24" viewBox="0 0 24 24"><rect x="2.4" y="2.3" width="17.7" height="17.6" fill="#fff" stroke="#6a9a94" stroke-width="1.5"/><rect x="3.1" y="3" width="16.3" height="3.4" fill="#d8f0ea"/><path d="M2.4 6.6H20.1" stroke="#6a9a94" stroke-width="1.1"/><path d="M5.7 13.4V17.6M9 8.7V17.6M12.75 11.3V17.6M16 13.4V17.6" stroke="#3f857b" stroke-width="1.5"/></svg>
<div class="t" style="left:256px;top:870px;font-size:18px;font-weight:700;color:#0f1d3a;">Component</div>
<svg style="left:560px;top:860px;" width="150" height="50" viewBox="0 0 150 50"><rect x="15.200000000000045" y="15" width="17" height="17" fill="#fff" stroke="#4d8a80" stroke-width="1.5"/><rect x="16" y="15.799999999999955" width="15.5" height="4" fill="#d8f0ea"/><path d="M15.20 19.90H32.200000000000045" stroke="#4d8a80" stroke-width="1.2"/><path d="M18.60 26.00V30.299999999999955M22.40 21.50V30.299999999999955M26.20 23.50V30.299999999999955M29.30 26.00V30.299999999999955" stroke="#2f7a6f" stroke-width="1.6"/><path d="M32.40 27.50V37.5M27.60 32.50H37.39999999999998" stroke="#eef1f6" stroke-width="4.2"/><path d="M32.40 28.30V36.700000000000045M28.40 32.50H36.60000000000002" stroke="#245c55" stroke-width="2"/><rect x="63.39999999999998" y="15" width="16.8" height="17" rx="1.5" fill="#fff" stroke="#8c6fd0" stroke-width="1.5"/><rect x="75" y="15.600000000000023" width="4.8" height="10.5" fill="#e2dcf7"/><rect x="64" y="27" width="10.5" height="4.8" fill="#e2dcf7"/><path d="M74.60 15.00V32M63.40 26.60H80.20000000000005M74.60 21.30H80.20000000000005M68.70 26.60V32" stroke="#8c6fd0" stroke-width="1.3"/><path d="M80.50 27.50V37.5M75.70 32.50H85.5" stroke="#eef1f6" stroke-width="4.2"/><path d="M80.50 28.30V36.700000000000045M76.50 32.50H84.70000000000005" stroke="#4a3a9e" stroke-width="2"/><rect x="112.89999999999998" y="16" width="16.4" height="17.8" fill="#fff" stroke="#4d6fb8" stroke-width="1.5"/><rect x="113.60000000000002" y="16.700000000000045" width="2" height="16.4" fill="#e5ecfa"/><path d="M115.70 16.00V33.799999999999955" stroke="#4d6fb8" stroke-width="1.3"/><rect x="118" y="18" width="9.3" height="5.9" fill="#a9c1ea"/><path d="M118.00 27.30H126.89999999999998M118.00 31.10H123.5" stroke="#4a78d0" stroke-width="1.8"/><path d="M128.70 27.50V37.5M123.90 32.50H133.70000000000005" stroke="#eef1f6" stroke-width="4.2"/><path d="M128.70 28.30V36.700000000000045M124.70 32.50H132.89999999999998" stroke="#2c4f9a" stroke-width="2"/></svg>
<div class="r" style="left:1851px;top:877px;width:1.5px;height:17px;background:#c9ced8"></div>
<svg style="left:1872px;top:873px;" width="24" height="24" viewBox="0 0 24 24"><g fill="none" stroke="#14223f" stroke-width="1.6"><circle cx="12.05" cy="11.75" r="9.8"/><path d="M6.5 14.6L12 9.6L17.4 14.6" stroke-width="1.6"/></g></svg>
</body></html>
